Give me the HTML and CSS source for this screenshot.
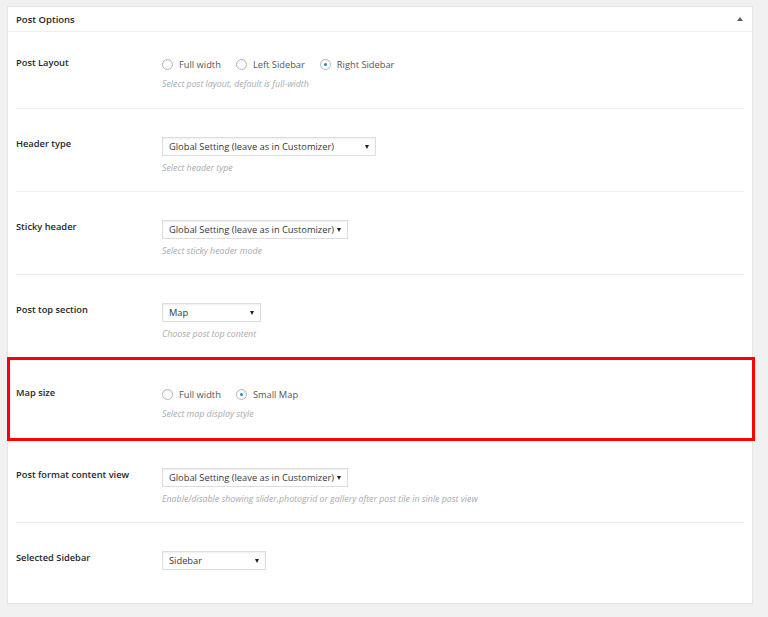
FILE: index.html
```html
<!DOCTYPE html>
<html lang="en">
<head>
    <meta charset="UTF-8">
    <title>Post Options</title>
    <link rel="stylesheet" href="styles.css">
</head>
<body>
<div class="postbox">
    <div class="postbox-header">
        <h2>Post Options</h2>
        <span class="toggle-arrow"></span>
    </div>
    <div class="inside">

        <div class="option-row first">
            <div class="option-label">Post Layout</div>
            <div class="option-field">
                <div class="radio-group">
                    <label class="radio"><span class="radio-dot"></span>Full width</label>
                    <label class="radio"><span class="radio-dot"></span>Left Sidebar</label>
                    <label class="radio checked"><span class="radio-dot"></span>Right Sidebar</label>
                </div>
                <p class="description">Select post layout, default is full-width</p>
            </div>
        </div>

        <div class="option-row">
            <div class="option-label">Header type</div>
            <div class="option-field">
                <div class="select select-wide"><span>Global Setting (leave as in Customizer)</span><span class="select-arrow"></span></div>
                <p class="description">Select header type</p>
            </div>
        </div>

        <div class="option-row">
            <div class="option-label">Sticky header</div>
            <div class="option-field">
                <div class="select select-fit"><span>Global Setting (leave as in Customizer)</span><span class="select-arrow"></span></div>
                <p class="description">Select sticky header mode</p>
            </div>
        </div>

        <div class="option-row">
            <div class="option-label">Post top section</div>
            <div class="option-field">
                <div class="select select-map"><span>Map</span><span class="select-arrow"></span></div>
                <p class="description">Choose post top content</p>
            </div>
        </div>

        <div class="option-row highlight">
            <div class="option-label">Map size</div>
            <div class="option-field">
                <div class="radio-group">
                    <label class="radio"><span class="radio-dot"></span>Full width</label>
                    <label class="radio checked"><span class="radio-dot"></span>Small Map</label>
                </div>
                <p class="description">Select map display style</p>
            </div>
        </div>

        <div class="option-row">
            <div class="option-label">Post format content view</div>
            <div class="option-field">
                <div class="select select-fit"><span>Global Setting (leave as in Customizer)</span><span class="select-arrow"></span></div>
                <p class="description">Enable/disable showing slider,photogrid or gallery after post tile in sinle post view</p>
            </div>
        </div>

        <div class="option-row last">
            <div class="option-label">Selected Sidebar</div>
            <div class="option-field">
                <div class="select select-sidebar"><span>Sidebar</span><span class="select-arrow"></span></div>
            </div>
        </div>

    </div>
</div>
</body>
</html>
```
FILE: styles.css
```css
body {
    margin: 0;
    padding: 6px 15px 0 7px;
    background: #f1f1f1;
    font-family: "Open Sans", sans-serif;
    font-size: 9.3px;
    color: #23282d;
}
.postbox {
    background: #fff;
    border: 1px solid #e5e5e5;
    box-shadow: 0 1px 1px rgba(0,0,0,0.04);
}
.postbox-header {
    display: flex;
    align-items: center;
    justify-content: space-between;
    height: 24px;
    padding: 0 9px 0 8px;
    border-bottom: 1px solid #eee;
}
.postbox-header h2 {
    margin: 0;
    font-size: 9.5px;
    font-weight: 600;
    color: #23282d;
}
.toggle-arrow {
    width: 0;
    height: 0;
    border-left: 3px solid transparent;
    border-right: 3px solid transparent;
    border-bottom: 4px solid #555d66;
}
.inside {
    padding: 0 8px;
}
.option-row {
    position: relative;
    display: flex;
    padding: 28px 0 16px;
    border-bottom: 1px solid #eee;
}
.option-row.first {
    padding-top: 24px;
    padding-bottom: 17px;
}
.option-row.highlight {
    padding-top: 28px;
    padding-bottom: 18px;
}
.option-row.last {
    border-bottom: none;
    padding-bottom: 33px;
}
.option-row.highlight::after {
    content: "";
    position: absolute;
    top: -1px;
    left: -9px;
    right: -11px;
    bottom: -2px;
    border: 3px solid #f00;
    pointer-events: none;
}
.option-label {
    width: 146px;
    flex-shrink: 0;
    font-weight: 600;
    line-height: 13px;
}
.option-field {
    flex: 1;
}
.radio-group {
    display: flex;
    gap: 15px;
    height: 16px;
    align-items: center;
}
.radio {
    display: flex;
    align-items: center;
    gap: 6px;
    color: #555;
}
.radio-dot {
    width: 9px;
    height: 9px;
    border: 1px solid #b4b9be;
    border-radius: 50%;
    background: #fff;
    box-shadow: inset 0 1px 2px rgba(0,0,0,0.07);
    display: flex;
    align-items: center;
    justify-content: center;
}
.radio.checked .radio-dot::before {
    content: "";
    width: 3px;
    height: 3px;
    border-radius: 50%;
    background: #1e8cbe;
}
.description {
    margin: 5px 0 0;
    line-height: 14px;
    font-size: 8.8px;
    font-style: italic;
    color: #a6abb0;
}
.select {
    display: flex;
    align-items: center;
    justify-content: space-between;
    box-sizing: border-box;
    height: 19px;
    padding: 0 6px 0 6px;
    border: 1px solid #ddd;
    box-shadow: inset 0 1px 2px rgba(0,0,0,0.07);
    color: #32373c;
}
.select-arrow {
    width: 0;
    height: 0;
    border-left: 2.5px solid transparent;
    border-right: 2.5px solid transparent;
    border-top: 4px solid #222;
}
.select-wide { width: 214px; }
.select-fit { width: 186px; }
.select-map { width: 99px; }
.select-sidebar { width: 104px; }
```
